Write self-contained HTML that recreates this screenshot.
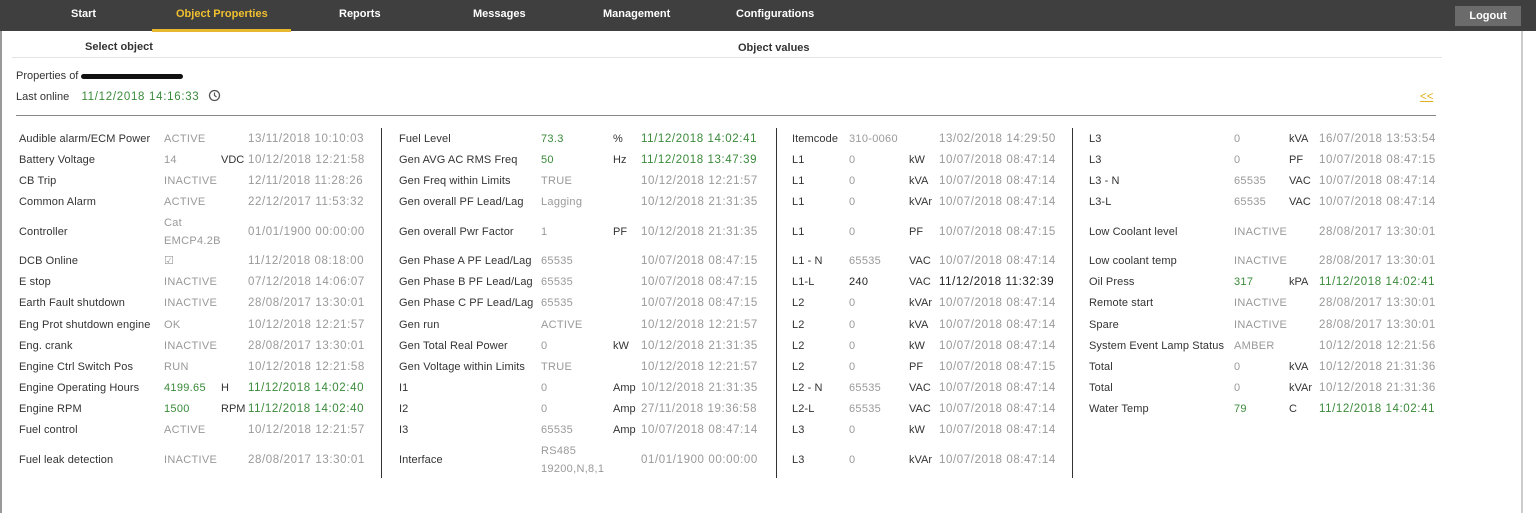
<!DOCTYPE html>
<html><head><meta charset="utf-8"><style>
body{margin:0;width:1536px;height:513px;background:#fff;font-family:"Liberation Sans","DejaVu Sans",sans-serif;position:relative;overflow:hidden;color:#333}
.nav{position:absolute;left:0;top:0;width:1536px;height:31px;background:#3f3f3f}
.nav span{position:absolute;top:8px;font-size:11px;font-weight:bold;color:#fff}
.nav .act{color:#f0c030}
.ul{position:absolute;left:152px;top:29px;width:139px;height:3px;background:#e8b830}
.logout{position:absolute;left:1455px;top:6px;width:66px;height:20px;background:#6b6b6b;color:#fff;font-size:11px;font-weight:bold;text-align:center;line-height:20px}
.lb{position:absolute;left:0;top:31px;width:2px;height:482px;background:#999}
.rb{position:absolute;left:1521px;top:31px;width:2px;height:482px;background:#ccc}
.t{position:absolute;font-size:11.5px;white-space:nowrap}
.c{position:absolute;top:1px;left:0}
.r{position:absolute;font-size:11.5px;white-space:nowrap;height:14px;line-height:14px}
.r b{font-weight:normal;color:#333;position:absolute;left:0;font-size:11px;letter-spacing:.1px}
.r i{font-style:normal;color:#999;position:absolute;left:var(--v);letter-spacing:.3px;font-size:11px}
.r u{text-decoration:none;color:#333;position:absolute;left:var(--u);font-size:11px}
.r s{text-decoration:none;color:#999;position:absolute;left:var(--d);letter-spacing:.6px}
.g i,.g s{color:#3a8a3a}
.k i,.k s{color:#222}
.vl{position:absolute;width:1px;background:#333;top:128px;height:350px}
</style></head><body>
<div class="nav">
<span style="left:71px">Start</span>
<span class="act" style="left:176px">Object Properties</span>
<span style="left:339px">Reports</span>
<span style="left:473px">Messages</span>
<span style="left:603px">Management</span>
<span style="left:736px">Configurations</span>
</div>
<div class="ul"></div>
<div class="logout">Logout</div>
<div class="lb"></div><div class="rb"></div>
<div class="t" style="left:85px;top:41px;font-weight:bold;font-size:11px">Select object</div>
<div class="t" style="left:738px;top:42px;font-weight:bold;font-size:11px">Object values</div>
<div style="position:absolute;left:12px;top:57px;width:1430px;height:1px;background:#e4e4e4"></div>
<div class="t" style="left:16px;top:70px;font-size:11px">Properties of <span style="display:inline-block;width:102px;height:5px;background:#111;border-radius:3px;vertical-align:middle"></span></div>
<div class="t" style="left:16px;top:91px;font-size:11px">Last online &nbsp;&nbsp;&nbsp;<span style="color:#3a8a3a;letter-spacing:.7px;font-size:11.5px">11/12/2018 14:16:33</span></div>
<svg style="position:absolute;left:208px;top:89px" width="13" height="13" viewBox="0 0 13 13"><circle cx="6.5" cy="6.5" r="5" fill="none" stroke="#555" stroke-width="1.3"/><path d="M6.5 3.5V6.5L8.5 8" stroke="#555" stroke-width="1.2" fill="none"/></svg>
<div class="t" style="left:1420px;top:91px;color:#e0b020;text-decoration:underline">&lt;&lt;</div>
<div style="position:absolute;left:16px;top:115px;width:1420px;height:1px;background:#888"></div>
<div class="vl" style="left:381px"></div><div class="vl" style="left:776px"></div><div class="vl" style="left:1072px"></div>

<div class="c" style="left:19px;--v:145px;--u:202px;--d:229px">
<div class="r" style="top:131px"><b>Audible alarm/ECM Power</b><i>ACTIVE</i><s>13/11/2018 10:10:03</s></div>
<div class="r" style="top:152px"><b>Battery Voltage</b><i>14</i><u>VDC</u><s>10/12/2018 12:21:58</s></div>
<div class="r" style="top:173px"><b>CB Trip</b><i>INACTIVE</i><s>12/11/2018 11:28:26</s></div>
<div class="r" style="top:194px"><b>Common Alarm</b><i>ACTIVE</i><s>22/12/2017 11:53:32</s></div>
<div class="r" style="top:224px"><b>Controller</b><i style="top:-9px">Cat</i><i style="top:9px">EMCP4.2B</i><s>01/01/1900 00:00:00</s></div>
<div class="r" style="top:253px"><b>DCB Online</b><i>&#9745;</i><s>11/12/2018 08:18:00</s></div>
<div class="r" style="top:274px"><b>E stop</b><i>INACTIVE</i><s>07/12/2018 14:06:07</s></div>
<div class="r" style="top:295px"><b>Earth Fault shutdown</b><i>INACTIVE</i><s>28/08/2017 13:30:01</s></div>
<div class="r" style="top:317px"><b>Eng Prot shutdown engine</b><i>OK</i><s>10/12/2018 12:21:57</s></div>
<div class="r" style="top:338px"><b>Eng. crank</b><i>INACTIVE</i><s>28/08/2017 13:30:01</s></div>
<div class="r" style="top:359px"><b>Engine Ctrl Switch Pos</b><i>RUN</i><s>10/12/2018 12:21:58</s></div>
<div class="r g" style="top:380px"><b>Engine Operating Hours</b><i>4199.65</i><u>H</u><s>11/12/2018 14:02:40</s></div>
<div class="r g" style="top:401px"><b>Engine RPM</b><i>1500</i><u>RPM</u><s>11/12/2018 14:02:40</s></div>
<div class="r" style="top:422px"><b>Fuel control</b><i>ACTIVE</i><s>10/12/2018 12:21:57</s></div>
<div class="r" style="top:452px"><b>Fuel leak detection</b><i>INACTIVE</i><s>28/08/2017 13:30:01</s></div>
</div>

<div class="c" style="left:399px;--v:142px;--u:214px;--d:242px">
<div class="r g" style="top:131px"><b>Fuel Level</b><i>73.3</i><u>%</u><s>11/12/2018 14:02:41</s></div>
<div class="r g" style="top:152px"><b>Gen AVG AC RMS Freq</b><i>50</i><u>Hz</u><s>11/12/2018 13:47:39</s></div>
<div class="r" style="top:173px"><b>Gen Freq within Limits</b><i>TRUE</i><s>10/12/2018 12:21:57</s></div>
<div class="r" style="top:194px"><b>Gen overall PF Lead/Lag</b><i>Lagging</i><s>10/12/2018 21:31:35</s></div>
<div class="r" style="top:224px"><b>Gen overall Pwr Factor</b><i>1</i><u>PF</u><s>10/12/2018 21:31:35</s></div>
<div class="r" style="top:253px"><b>Gen Phase A PF Lead/Lag</b><i>65535</i><s>10/07/2018 08:47:15</s></div>
<div class="r" style="top:274px"><b>Gen Phase B PF Lead/Lag</b><i>65535</i><s>10/07/2018 08:47:15</s></div>
<div class="r" style="top:295px"><b>Gen Phase C PF Lead/Lag</b><i>65535</i><s>10/07/2018 08:47:15</s></div>
<div class="r" style="top:317px"><b>Gen run</b><i>ACTIVE</i><s>10/12/2018 12:21:57</s></div>
<div class="r" style="top:338px"><b>Gen Total Real Power</b><i>0</i><u>kW</u><s>10/12/2018 21:31:35</s></div>
<div class="r" style="top:359px"><b>Gen Voltage within Limits</b><i>TRUE</i><s>10/12/2018 12:21:57</s></div>
<div class="r" style="top:380px"><b>I1</b><i>0</i><u>Amp</u><s>10/12/2018 21:31:35</s></div>
<div class="r" style="top:401px"><b>I2</b><i>0</i><u>Amp</u><s>27/11/2018 19:36:58</s></div>
<div class="r" style="top:422px"><b>I3</b><i>65535</i><u>Amp</u><s>10/07/2018 08:47:14</s></div>
<div class="r" style="top:452px"><b>Interface</b><i style="top:-9px">RS485</i><i style="top:9px">19200,N,8,1</i><s>01/01/1900 00:00:00</s></div>
</div>

<div class="c" style="left:792px;--v:57px;--u:117px;--d:147px">
<div class="r" style="top:131px"><b>Itemcode</b><i>310-0060</i><s>13/02/2018 14:29:50</s></div>
<div class="r" style="top:152px"><b>L1</b><i>0</i><u>kW</u><s>10/07/2018 08:47:14</s></div>
<div class="r" style="top:173px"><b>L1</b><i>0</i><u>kVA</u><s>10/07/2018 08:47:14</s></div>
<div class="r" style="top:194px"><b>L1</b><i>0</i><u>kVAr</u><s>10/07/2018 08:47:14</s></div>
<div class="r" style="top:224px"><b>L1</b><i>0</i><u>PF</u><s>10/07/2018 08:47:15</s></div>
<div class="r" style="top:253px"><b>L1 - N</b><i>65535</i><u>VAC</u><s>10/07/2018 08:47:14</s></div>
<div class="r k" style="top:274px"><b>L1-L</b><i>240</i><u>VAC</u><s>11/12/2018 11:32:39</s></div>
<div class="r" style="top:295px"><b>L2</b><i>0</i><u>kVAr</u><s>10/07/2018 08:47:14</s></div>
<div class="r" style="top:317px"><b>L2</b><i>0</i><u>kVA</u><s>10/07/2018 08:47:14</s></div>
<div class="r" style="top:338px"><b>L2</b><i>0</i><u>kW</u><s>10/07/2018 08:47:14</s></div>
<div class="r" style="top:359px"><b>L2</b><i>0</i><u>PF</u><s>10/07/2018 08:47:15</s></div>
<div class="r" style="top:380px"><b>L2 - N</b><i>65535</i><u>VAC</u><s>10/07/2018 08:47:14</s></div>
<div class="r" style="top:401px"><b>L2-L</b><i>65535</i><u>VAC</u><s>10/07/2018 08:47:14</s></div>
<div class="r" style="top:422px"><b>L3</b><i>0</i><u>kW</u><s>10/07/2018 08:47:14</s></div>
<div class="r" style="top:452px"><b>L3</b><i>0</i><u>kVAr</u><s>10/07/2018 08:47:14</s></div>
</div>

<div class="c" style="left:1089px;--v:145px;--u:200px;--d:230px">
<div class="r" style="top:131px"><b>L3</b><i>0</i><u>kVA</u><s>16/07/2018 13:53:54</s></div>
<div class="r" style="top:152px"><b>L3</b><i>0</i><u>PF</u><s>10/07/2018 08:47:15</s></div>
<div class="r" style="top:173px"><b>L3 - N</b><i>65535</i><u>VAC</u><s>10/07/2018 08:47:14</s></div>
<div class="r" style="top:194px"><b>L3-L</b><i>65535</i><u>VAC</u><s>10/07/2018 08:47:14</s></div>
<div class="r" style="top:224px"><b>Low Coolant level</b><i>INACTIVE</i><s>28/08/2017 13:30:01</s></div>
<div class="r" style="top:253px"><b>Low coolant temp</b><i>INACTIVE</i><s>28/08/2017 13:30:01</s></div>
<div class="r g" style="top:274px"><b>Oil Press</b><i>317</i><u>kPA</u><s>11/12/2018 14:02:41</s></div>
<div class="r" style="top:295px"><b>Remote start</b><i>INACTIVE</i><s>28/08/2017 13:30:01</s></div>
<div class="r" style="top:317px"><b>Spare</b><i>INACTIVE</i><s>28/08/2017 13:30:01</s></div>
<div class="r" style="top:338px"><b>System Event Lamp Status</b><i>AMBER</i><s>10/12/2018 12:21:56</s></div>
<div class="r" style="top:359px"><b>Total</b><i>0</i><u>kVA</u><s>10/12/2018 21:31:36</s></div>
<div class="r" style="top:380px"><b>Total</b><i>0</i><u>kVAr</u><s>10/12/2018 21:31:36</s></div>
<div class="r g" style="top:401px"><b>Water Temp</b><i>79</i><u>C</u><s>11/12/2018 14:02:41</s></div>
</div>
</body></html>
